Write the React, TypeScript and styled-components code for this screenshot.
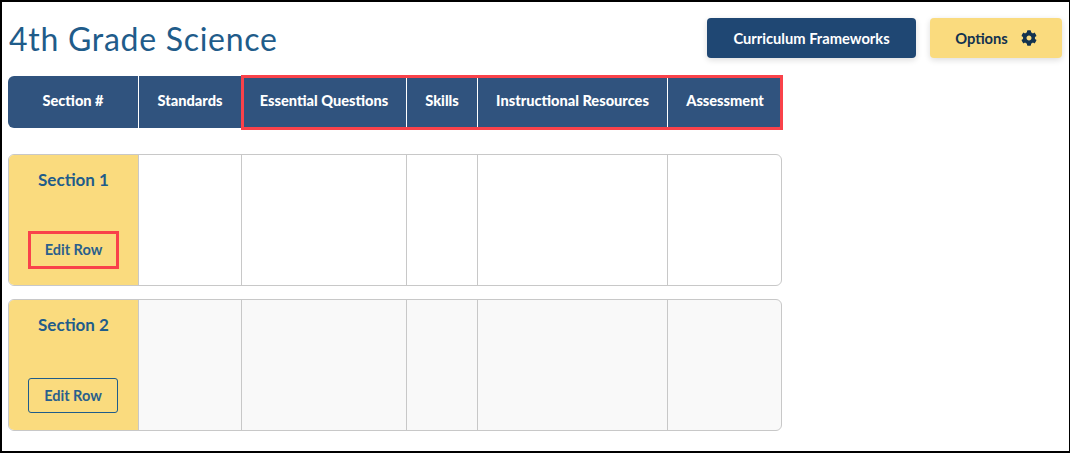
import React from "react";
import styled, { createGlobalStyle } from "styled-components";
import { FaCog } from "react-icons/fa";

const Global = createGlobalStyle`
  html, body { margin: 0; padding: 0; background: #fff; }
  body { font-family: "Lato", "Open Sans", sans-serif; }
  * { box-sizing: border-box; }
`;

const Frame = styled.div`
  width: 1070px;
  height: 453px;
  border-style: solid;
  border-color: #000;
  border-width: 2px 1px 2px 2px;
  padding: 16px 7px 0 6px;
  overflow: hidden;
`;

const TopBar = styled.header`
  display: flex;
  align-items: center;
  height: 40px;
  margin-bottom: 18px;
`;

const Title = styled.h1`
  flex: 1;
  margin: 0 0 0 1px;
  font-size: 32px;
  font-weight: 400;
  letter-spacing: 0.72px;
  color: #1f5c8a;
`;

const ActionButton = styled.button<{ $gold?: boolean }>`
  display: flex;
  align-items: center;
  justify-content: center;
  gap: 13px;
  height: 40px;
  width: ${(p) => (p.$gold ? "132px" : "209px")};
  margin-left: 14px;
  padding: 0 0 1px;
  border: 0;
  border-radius: 4px;
  font: 700 14.7px "Lato", sans-serif;
  color: ${(p) => (p.$gold ? "#12324f" : "#fff")};
  background: ${(p) => (p.$gold ? "#fadb7e" : "#1f4773")};
  box-shadow: 0 2px 6px rgba(0, 0, 0, 0.14);
`;

const Table = styled.div`
  width: 774px;
`;

const HeadGrid = styled.div`
  display: grid;
  grid-template-columns: 131px 103px 165px 71px 190px 114px;
  height: 52px;
  margin-bottom: 26px;
  position: relative;
`;

const HeadCell = styled.div`
  display: flex;
  align-items: center;
  justify-content: center;
  padding-bottom: 4px;
  background: #30537e;
  color: #fff;
  font-size: 14.6px;
  font-weight: 900;
  border-right: 1px solid #fff;
  &:first-child { border-radius: 6px 0 0 6px; }
  &:nth-child(6) { border-right: 0; border-radius: 0 6px 6px 0; }
`;

const HeadHighlight = styled.div`
  position: absolute;
  left: 233px;
  top: -1px;
  width: 542px;
  height: 55px;
  border: 3px solid #f9424a;
`;

const Row = styled.div<{ $shaded?: boolean }>`
  display: grid;
  grid-template-columns: 130px 103px 165px 71px 190px 113px;
  height: 132px;
  margin-bottom: 13px;
  border: 1px solid #c8c8c8;
  border-radius: 6px;
  overflow: hidden;
  background: ${(p) => (p.$shaded ? "#f9f9f9" : "#fff")};
`;

const SectionCell = styled.div`
  display: flex;
  flex-direction: column;
  align-items: center;
  background: #fadb7e;
  border-right: 1px solid #c8c8c8;
  padding-top: 15px;
`;

const SectionName = styled.div`
  height: 20px;
  line-height: 20px;
  font-size: 17px;
  font-weight: 700;
  color: #1f5c8a;
`;

const EditButton = styled.button<{ $flagged?: boolean }>`
  width: ${(p) => (p.$flagged ? "91px" : "90px")};
  height: ${(p) => (p.$flagged ? "38px" : "35px")};
  margin-top: ${(p) => (p.$flagged ? "41px" : "43px")};
  margin-right: ${(p) => (p.$flagged ? "0" : "1px")};
  padding: 0 0 ${(p) => (p.$flagged ? "2px" : "1px")};
  background: transparent;
  border: ${(p) => (p.$flagged ? "3px solid #f9424a" : "1px solid #1f5c8a")};
  border-radius: ${(p) => (p.$flagged ? "0" : "3px")};
  font: 700 14.5px "Lato", sans-serif;
  color: #2a5f8c;
`;

const Cell = styled.div`
  border-right: 1px solid #c8c8c8;
  &:last-child { border-right: 0; }
`;

const heads = ["Section #", "Standards", "Essential Questions", "Skills", "Instructional Resources", "Assessment"];

export default function App() {
  return (
    <Frame>
      <Global />
      <TopBar>
        <Title>4th Grade Science</Title>
        <ActionButton>Curriculum Frameworks</ActionButton>
        <ActionButton $gold>
          Options <FaCog size={16} />
        </ActionButton>
      </TopBar>
      <Table>
        <HeadGrid>
          {heads.map((h) => (
            <HeadCell key={h}>{h}</HeadCell>
          ))}
          <HeadHighlight />
        </HeadGrid>
        {[1, 2].map((n) => (
          <Row key={n} $shaded={n === 2}>
            <SectionCell>
              <SectionName>Section {n}</SectionName>
              <EditButton $flagged={n === 1}>Edit Row</EditButton>
            </SectionCell>
            {[0, 1, 2, 3, 4].map((c) => (
              <Cell key={c} />
            ))}
          </Row>
        ))}
      </Table>
    </Frame>
  );
}
